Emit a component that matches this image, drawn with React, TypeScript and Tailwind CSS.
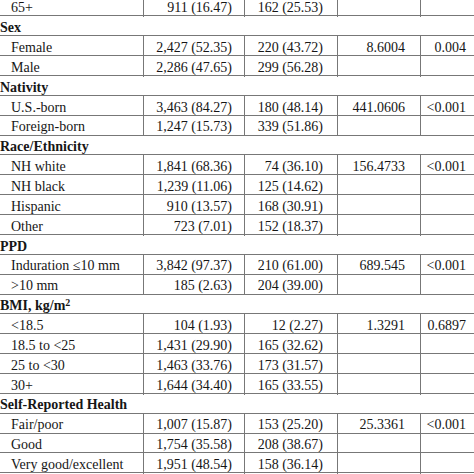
import React from 'react';

type Row =
  | { h: React.ReactNode }
  | { l: string; a: string; b: string; c?: string; p?: string };

const rows: Row[] = [
  { l: '65+', a: '911 (16.47)', b: '162 (25.53)' },
  { h: 'Sex' },
  { l: 'Female', a: '2,427 (52.35)', b: '220 (43.72)', c: '8.6004', p: '0.004' },
  { l: 'Male', a: '2,286 (47.65)', b: '299 (56.28)' },
  { h: 'Nativity' },
  { l: 'U.S.-born', a: '3,463 (84.27)', b: '180 (48.14)', c: '441.0606', p: '<0.001' },
  { l: 'Foreign-born', a: '1,247 (15.73)', b: '339 (51.86)' },
  { h: 'Race/Ethnicity' },
  { l: 'NH white', a: '1,841 (68.36)', b: '74 (36.10)', c: '156.4733', p: '<0.001' },
  { l: 'NH black', a: '1,239 (11.06)', b: '125 (14.62)' },
  { l: 'Hispanic', a: '910 (13.57)', b: '168 (30.91)' },
  { l: 'Other', a: '723 (7.01)', b: '152 (18.37)' },
  { h: 'PPD' },
  { l: 'Induration \u226410 mm', a: '3,842 (97.37)', b: '210 (61.00)', c: '689.545', p: '<0.001' },
  { l: '>10 mm', a: '185 (2.63)', b: '204 (39.00)' },
  {
    h: (
      <>
        BMI, kg/m<span className="relative top-[-4px] text-[10px]">2</span>
      </>
    ),
  },
  { l: '<18.5', a: '104 (1.93)', b: '12 (2.27)', c: '1.3291', p: '0.6897' },
  { l: '18.5 to <25', a: '1,431 (29.90)', b: '165 (32.62)' },
  { l: '25 to <30', a: '1,463 (33.76)', b: '173 (31.57)' },
  { l: '30+', a: '1,644 (34.40)', b: '165 (33.55)' },
  { h: 'Self-Reported Health' },
  { l: 'Fair/poor', a: '1,007 (15.87)', b: '153 (25.20)', c: '25.3361', p: '<0.001' },
  { l: 'Good', a: '1,754 (35.58)', b: '208 (38.67)' },
  { l: 'Very good/excellent', a: '1,951 (48.54)', b: '158 (36.14)' },
];

export default function App() {
  return (
    <div className="w-[474px] h-[474px] overflow-hidden bg-white text-[#161616] text-[14px] font-['Liberation_Serif','Times_New_Roman',serif]">
      <div className="mt-[-3.4px] flex flex-col">
        {rows.map((r, i) =>
          'h' in r ? (
            <div
              key={i}
              className="h-[19.87px] shrink-0 border-b border-[#777777] font-bold whitespace-nowrap pt-[2.6px] leading-[18px]"
            >
              {r.h}
            </div>
          ) : (
            <div
              key={i}
              className="h-[19.87px] shrink-0 border-b border-[#777777] grid grid-cols-[143px_101px_93px_83px_1fr] whitespace-nowrap leading-[18px]"
            >
              <div className="pl-[11px] pt-[2.6px]">{r.l}</div>
              <div className="border-l border-[#777777] text-right pr-[12px] pt-[2.6px]">{r.a}</div>
              <div className="border-l border-[#777777] text-right pr-[14px] pt-[2.6px]">{r.b}</div>
              <div className="border-l border-[#777777] text-right pr-[15px] pt-[2.6px]">{r.c ?? ''}</div>
              <div className="border-l border-[#777777] text-right pr-[8px] pt-[2.6px]">{r.p ?? ''}</div>
            </div>
          )
        )}
      </div>
    </div>
  );
}
